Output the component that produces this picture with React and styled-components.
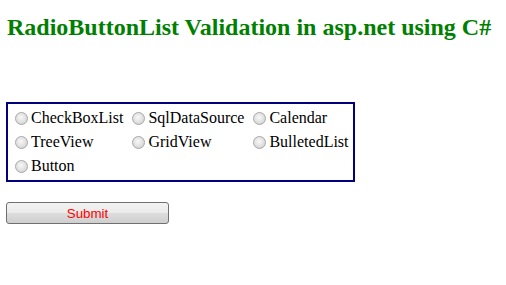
import styled, { createGlobalStyle } from 'styled-components';

const GlobalStyle = createGlobalStyle`
  html, body {
    margin: 0;
    padding: 0;
    background: #ffffff;
  }
  body {
    font-family: "Liberation Serif", "Times New Roman", serif;
    color: #000000;
  }
`;

const Page = styled.div`
  padding: 12px 6px 0 6px;
`;

const Title = styled.h2`
  margin: 0;
  font-size: 24px;
  line-height: 30px;
  font-weight: bold;
  color: #008000;
  padding-left: 1px;
`;

const ListBox = styled.div`
  display: inline-grid;
  grid-template-columns: auto auto auto;
  column-gap: 9px;
  margin-top: 60px;
  padding: 2px 4px 2px 7px;
  border: 2px solid #000080;
`;

const Option = styled.label`
  display: flex;
  align-items: center;
  gap: 3px;
  height: 24px;
  font-size: 16px;
  white-space: nowrap;
`;

const Radio = styled.span`
  width: 11px;
  height: 11px;
  border-radius: 50%;
  border: 1px solid #a8a8a8;
  background: radial-gradient(circle at 45% 40%, #f8f8f8 0%, #e2e2e2 50%, #c8c8c8 100%);
  flex: none;
`;

const SubmitButton = styled.button`
  display: block;
  margin-top: 20px;
  width: 163px;
  height: 22px;
  border: 1px solid #707070;
  border-radius: 3px;
  background: linear-gradient(#f2f2f2 0%, #ebebeb 50%, #dddddd 50%, #cfcfcf 100%);
  color: #ff0000;
  font-family: "Liberation Sans", Arial, sans-serif;
  font-size: 13.33px;
  padding: 0;
`;

const options = [
  'CheckBoxList', 'SqlDataSource', 'Calendar',
  'TreeView', 'GridView', 'BulletedList',
  'Button',
];

export default function App() {
  return (
    <Page>
      <GlobalStyle />
      <Title>RadioButtonList Validation in asp.net using C#</Title>
      <ListBox>
        {options.map((name) => (
          <Option key={name}>
            <Radio />
            {name}
          </Option>
        ))}
      </ListBox>
      <SubmitButton>Submit</SubmitButton>
    </Page>
  );
}
